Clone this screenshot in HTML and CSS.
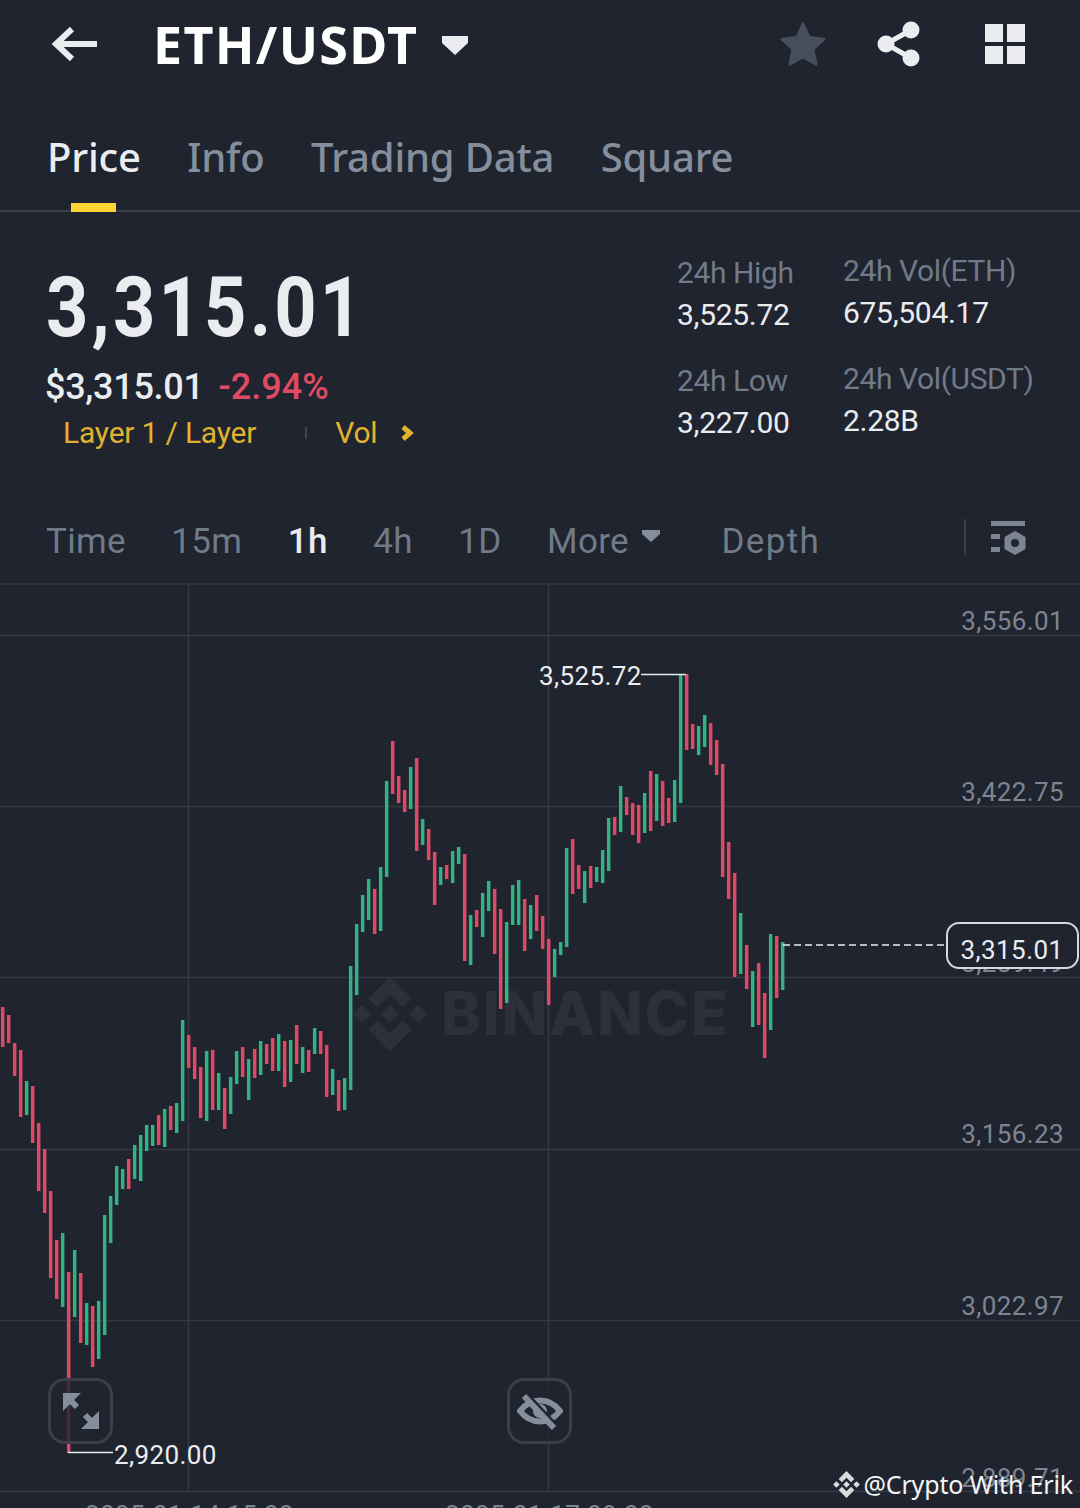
FILE: index.html
```html
<!DOCTYPE html>
<html lang="en">

  <head>
    <meta charset="UTF-8">
    <meta name="viewport" content="width=device-width, initial-scale=1.0">
    <title>ETH/USDT</title>
    <link rel="stylesheet" href="styles.css">
  </head>

  <body>
    <svg class="defs" width="0" height="0">
      <symbol id="bnb" viewBox="0 0 32 32">
        <path d="M16 3l7.6 7.6-3.2 3.2L16 9.4l-4.4 4.4-3.2-3.2zM16 29l7.6-7.6-3.2-3.2-4.4 4.4-4.4-4.4-3.2 3.2zM16 12.8l3.2 3.2-3.2 3.2-3.2-3.2zM3 16l3.2-3.2L9.4 16l-3.2 3.2zM22.600 16l3.2-3.2L29 16l-3.200 3.2z"/>
      </symbol>
    </svg>

    <header class="topbar">
      <svg class="back" width="50" height="36" viewBox="0 0 50 36">
        <path d="M47 18H6M22 3L6 18l16 15"/>
      </svg>
      <div class="pair">ETH/USDT</div>
      <svg class="caret" width="30" height="22" viewBox="0 0 30 22">
        <path d="M2 2h26v7L15 21 2 9z"/>
      </svg>
      <div class="topbar-actions">
        <svg class="star" width="48" height="48" viewBox="0 0 48 48">
          <path d="M24 4l6 13.500 15 1.700-11 10 3 15-13-7.500-13 7.500 3-15-11-10 15-1.700z"/>
        </svg>
        <svg class="share" width="46" height="46" viewBox="0 0 46 46">
          <path d="M35 9L10 23l25 14"/>
          <circle cx="35" cy="9" r="8.500"/>
          <circle cx="10" cy="23" r="8.500"/>
          <circle cx="35" cy="37" r="8.500"/>
        </svg>
        <div class="tiles">
          <span></span><span></span><span></span><span></span>
        </div>
      </div>
    </header>

    <nav class="tabs">
      <div class="tab tab-active">Price</div>
      <div class="tab">Info</div>
      <div class="tab">Trading Data</div>
      <div class="tab">Square</div>
    </nav>

    <section class="summary">
      <div class="quote">
        <div class="last-price">3,315.01</div>
        <div class="quote-line">
          <span class="fiat">$3,315.01</span>
          <span class="change">-2.94%</span>
        </div>
        <div class="tags">
          <span>Layer 1 / Layer</span>
          <i class="tag-sep"></i>
          <span>Vol</span>
          <svg class="tag-arrow" width="14" height="18" viewBox="0 0 14 18">
            <path d="M3 3l7 6-7 6"/>
          </svg>
        </div>
      </div>
      <div class="stats stats-first">
        <div class="stat-name">24h High</div>
        <div class="stat-value">3,525.72</div>
        <div class="stat-name stat-gap">24h Low</div>
        <div class="stat-value">3,227.00</div>
      </div>
      <div class="stats stats-second">
        <div class="stat-name">24h Vol(ETH)</div>
        <div class="stat-value">675,504.17</div>
        <div class="stat-name stat-gap">24h Vol(USDT)</div>
        <div class="stat-value">2.28B</div>
      </div>
    </section>

    <nav class="intervals">
      <div>Time</div>
      <div>15m</div>
      <div class="interval-active">1h</div>
      <div>4h</div>
      <div>1D</div>
      <div class="more">More
        <svg width="20" height="14" viewBox="0 0 20 14">
          <path d="M1 1h18v4l-9 8-9-8z"/>
        </svg>
      </div>
      <div class="depth">Depth</div>
      <i class="interval-sep"></i>
      <svg class="indicator" width="36" height="36" viewBox="0 0 36 36">
        <path d="M1 2h34v5H1zM1 15h9v5H1zM1 28h9v5H1z"/>
        <path fill-rule="evenodd" d="M25 12l10.500 6v12L25 36l-10.500-6V18zM25 20a4 4 0 1 0 0 8 4 4 0 0 0 0-8z"/>
      </svg>
    </nav>

    <main class="chart">
      <svg id="chart-svg" class="chart-svg" width="1080" height="923" viewBox="0 585 1080 923">
        <g class="watermark">
          <use href="#bnb" x="344" y="968" width="92" height="92"/>
          <text x="441" y="1035">BINANCE</text>
        </g>
        <path class="grid" d="M0 635.500H1080M0 806.500H1080M0 977.500H1080M0 1149.500H1080M0 1320.500H1080M0 1491.500H1080M188.500 585V1491M548.500 585V1491"/>

        <g id="candles"></g>

        <path class="marker" d="M641 674.500H686M68 1452.500H113"/>
        <text class="marker-text" x="539" y="685">3,525.72</text>
        <text class="marker-text" x="114" y="1464">2,920.00</text>

        <g class="axis">
          <text x="1064" y="630">3,556.01</text>
          <text x="1064" y="801">3,422.75</text>
          <text x="1064" y="972">3,289.49</text>
          <text x="1064" y="1143">3,156.23</text>
          <text x="1064" y="1315">3,022.97</text>
          <text x="1064" y="1487">2,889.71</text>
        </g>
        <g class="dates">
          <text x="85" y="1524">2025-01-14 15:00</text>
          <text x="445" y="1524">2025-01-17 09:00</text>
        </g>

        <path class="last-line" d="M783 945H946"/>
        <rect class="last-pill" x="947" y="923" width="131" height="45" rx="12"/>
        <text class="last-text" x="1012" y="959">3,315.01</text>
      </svg>

      <div class="chart-btn chart-btn-expand">
        <svg width="42" height="42" viewBox="0 0 42 42">
          <path d="M3 3h18L3 21zM39 39H21l18-18z"/>
          <path class="btn-stroke" d="M10 10l7 7M25 25l7 7"/>
        </svg>
      </div>
      <div class="chart-btn chart-btn-eye">
        <svg width="46" height="46" viewBox="0 0 46 46">
          <path class="btn-stroke" d="M3 23c11-14 29-14 40 0-11 14-29 14-40 0z"/>
          <circle class="btn-fill" cx="23" cy="23" r="7"/>
          <path class="btn-gap" d="M9 6l30 32"/>
          <path class="btn-stroke" d="M7 8l30 32"/>
        </svg>
      </div>

      <div class="credit">
        <svg width="33" height="33" viewBox="0 0 32 32"><use href="#bnb"/></svg>
        <span>@Crypto With Erik</span>
      </div>
    </main>

    <script src="chart.js"></script>
  </body>

</html>
```

FILE: styles.css
```css
* {
  box-sizing: border-box;
}

html,
body {
  margin: 0;
  height: 100%;
}

body {
  width: 1080px;
  height: 1508px;
  overflow: hidden;
  background-color: #1f242f;
  color: #eaecef;
  font-family: "Noto Sans", sans-serif;
}

.defs {
  position: absolute;
}

.topbar {
  display: flex;
  align-items: center;
  height: 88px;
  padding: 0 55px 0 50px;
}

.back {
  fill: none;
  stroke: #eaecef;
  stroke-width: 6;
}

.pair {
  margin: -2px 0 0 53px;
  font-family: "Noto Sans", sans-serif;
  font-size: 52px;
  font-weight: 700;
  letter-spacing: 1.300px;
  color: #fff;
}

.caret {
  margin-left: 22px;
  margin-top: 2px;
  fill: #eaecef;
}

.topbar-actions {
  display: flex;
  align-items: center;
  margin-left: auto;
}

.star {
  fill: #474e5c;
  stroke: #474e5c;
  stroke-width: 3;
  stroke-linejoin: round;
}

.share {
  margin-left: 49px;
  fill: #eaecef;
  stroke: #eaecef;
}

.share path {
  fill: none;
  stroke-width: 5;
}

.share circle {
  stroke: none;
}

.tiles {
  display: grid;
  grid-template-columns: 18px 18px;
  grid-auto-rows: 18px;
  gap: 4px;
  margin-left: 63px;
}

.tiles span {
  background-color: #eaecef;
}

.tabs {
  display: flex;
  gap: 46.500px;
  height: 124px;
  padding: 39px 0 0 47px;
  border-bottom: 2px solid #383d48;
  letter-spacing: -0.200px;
}

.tab {
  position: relative;
  height: 85px;
  font-size: 40px;
  line-height: 60px;
  font-weight: 500;
  color: #848e9c;
}

.tab-active {
  color: #eaecef;
}

.tab-active:after {
  content: "";
  position: absolute;
  left: 24px;
  bottom: 0;
  width: 45px;
  height: 9px;
  background-color: #fcd535;
}

.summary {
  position: relative;
  height: 289px;
}

.quote {
  padding: 47px 0 0 46px;
}

/* the app's numerals are narrower than Roboto, so squeeze the big one */
.last-price {
  font-family: Roboto, sans-serif;
  font-size: 84px;
  line-height: 98px;
  font-weight: 700;
  letter-spacing: 3.600px;
  transform: scaleX(0.88);
  transform-origin: left;
}

.quote-line {
  display: flex;
  gap: 15px;
  margin: 8px 0 0 -1px;
  font-family: Roboto, sans-serif;
  font-size: 36px;
  line-height: 44px;
  font-weight: 500;
}

.fiat {
  letter-spacing: -0.300px;
}

.change {
  color: #e04a62;
}

.tags {
  display: flex;
  align-items: center;
  margin: 4px 0 0 17px;
  font-family: Roboto, sans-serif;
  font-size: 30px;
  line-height: 40px;
  letter-spacing: -0.200px;
  color: #e0b22e;
}

.tag-sep {
  width: 2px;
  height: 12px;
  margin: 0 28px 0 49px;
  background-color: #3d434e;
}

.tag-arrow {
  margin-left: 23px;
  fill: none;
  stroke: #e0b22e;
  stroke-width: 5;
}

.stats {
  position: absolute;
  font-family: Roboto, sans-serif;
  font-size: 30px;
  line-height: 42px;
  letter-spacing: -0.400px;
  white-space: nowrap;
}

.stats-first {
  left: 677px;
  top: 40px;
}

.stats-second {
  left: 843px;
  top: 38px;
}

.stat-name {
  color: #707a89;
}

.stat-value {
  color: #eaecef;
  letter-spacing: -0.300px;
}

.stat-gap {
  margin-top: 24px;
}

.intervals {
  display: flex;
  align-items: center;
  gap: 45.500px;
  height: 84px;
  padding: 0 54px 2px 46px;
  border-bottom: 2px solid #2d323c;
  font-family: Roboto, sans-serif;
  font-size: 35px;
  letter-spacing: 0.300px;
  color: #707a89;
}

.interval-active {
  color: #eaecef;
  font-weight: 500;
}

.more {
  display: flex;
  align-items: center;
  gap: 12px;
}

.more svg {
  margin-top: -10px;
  fill: #848e9c;
}

.depth {
  margin-left: 15px;
  letter-spacing: 1.400px;
}

.interval-sep {
  width: 2px;
  height: 36px;
  margin-left: auto;
  margin-top: -8px;
  background-color: #383d48;
}

.indicator {
  margin-left: -21.500px;
  margin-top: -8px;
  fill: #7d8594;
}

.chart {
  position: relative;
  height: 923px;
}

.chart-svg {
  display: block;
}

.grid {
  fill: none;
  stroke: #343944;
  stroke-width: 1.500;
}

.watermark {
  fill: #2b303a;
  font-family: Inter, sans-serif;
  font-size: 60px;
  font-weight: 800;
  letter-spacing: 1.700px;
}

.candle-up {
  stroke: #35b184;
  stroke-width: 3.500;
}

.candle-down {
  stroke: #dc4a63;
  stroke-width: 3.500;
}

.marker {
  fill: none;
  stroke: #eaecef;
  stroke-width: 1.500;
}

.marker-text,
.last-text {
  fill: #eaecef;
  font-family: Roboto, sans-serif;
  font-size: 26px;
  letter-spacing: 0.400px;
}

.last-text {
  text-anchor: middle;
}

.axis text {
  fill: #7d8592;
  font-family: Roboto, sans-serif;
  font-size: 26px;
  letter-spacing: 0.400px;
  text-anchor: end;
}

.dates text {
  fill: #7d8592;
  font-family: Roboto, sans-serif;
  font-size: 26px;
  letter-spacing: 0.400px;
}

.last-line {
  fill: none;
  stroke: #eaecef;
  stroke-width: 1.500;
  stroke-dasharray: 7 4;
}

.last-pill {
  fill: #1f242f;
  stroke: #d5d8dd;
  stroke-width: 2;
}

.chart-btn {
  position: absolute;
  top: 793px;
  display: flex;
  align-items: center;
  justify-content: center;
  width: 65px;
  height: 66px;
  border: 3px solid #3a3f4a;
  border-radius: 17px;
  background-color: rgba(31, 36, 47, 0.8);
}

.chart-btn-expand {
  left: 48px;
}

.chart-btn-eye {
  left: 507px;
}

.chart-btn svg {
  fill: #848e9c;
}

.btn-stroke {
  fill: none;
  stroke: #848e9c;
  stroke-width: 6;
}

.btn-fill {
  fill: #848e9c;
}

.btn-gap {
  fill: none;
  stroke: #1f242f;
  stroke-width: 5;
}

.credit {
  position: absolute;
  right: 7px;
  top: 881px;
  display: flex;
  align-items: center;
  font-size: 25px;
  line-height: 36px;
  letter-spacing: -0.150px;
  color: #f4f5f6;
}

.credit svg {
  fill: #d8dadc;
}
```

FILE: chart.js
```js
// one candle per entry: direction, top y, bottom y (page pixels)
const candles = [
  'd1007,1047', 'd1015,1043', 'd1043,1076', 'd1050,1117', 'u1081,1115', 'd1086,1143', 'd1123,1191', 'd1149,1213',
  'd1191,1278', 'd1240,1299', 'u1233,1307', 'd1272,1453', 'u1250,1317', 'd1273,1343', 'u1303,1345', 'd1306,1367',
  'u1301,1359', 'u1215,1335', 'u1196,1243', 'u1166,1205', 'u1169,1189', 'd1159,1189', 'u1145,1179', 'u1135,1181',
  'u1125,1151', 'u1125,1146', 'd1115,1145', 'u1109,1147', 'd1106,1130', 'u1103,1133', 'u1020,1121', 'd1035,1068',
  'd1047,1079', 'd1067,1118', 'u1051,1121', 'd1050,1110', 'u1073,1110', 'd1088,1129', 'u1077,1114', 'u1051,1084',
  'd1047,1077', 'u1059,1100', 'd1049,1078', 'u1041,1075', 'd1044,1064', 'd1038,1071', 'u1034,1071', 'd1041,1087',
  'u1040,1082', 'd1025,1064', 'u1047,1073', 'd1050,1072', 'u1028,1054', 'd1031,1054', 'd1045,1097', 'u1069,1095',
  'd1080,1111', 'u1078,1110', 'u966,1090', 'u924,995', 'u895,932', 'u879,920', 'd889,934', 'u867,931',
  'u781,877', 'd741,794', 'd776,803', 'd790,812', 'u767,809', 'd758,851', 'u819,845', 'd829,860',
  'd852,905', 'u867,885', 'd865,879', 'u851,883', 'u847,864', 'd854,961', 'u915,965', 'd910,927',
  'u893,937', 'u881,911', 'd889,954', 'd909,1009', 'u922,1003', 'u885,925', 'u880,925', 'd899,951',
  'u905,939', 'd895,931', 'd916,949', 'd939,1005', 'u949,977', 'u942,955', 'u848,947', 'd839,894',
  'd865,889', 'u871,903', 'd866,888', 'u867,882', 'u850,883', 'u818,871', 'd817,835', 'u786,832',
  'd797,815', 'd803,835', 'd805,843', 'u793,833', 'd771,831', 'u774,821', 'd781,826', 'd798,823',
  'u780,822', 'u675,803', 'd674,750', 'd724,749', 'u726,755', 'u715,747', 'd723,765', 'd740,775',
  'd764,877', 'd842,899', 'd873,977', 'u913,974', 'd945,989', 'u971,1027', 'd963,1025', 'd993,1058',
  'u934,1030', 'd936,998', 'u942,990'
];

const group = document.getElementById('candles');

candles.forEach(function (candle, i) {
  const ys = candle.slice(1).split(',');
  const x = 2.67 + i * 6;
  const line = document.createElementNS('http://www.w3.org/2000/svg', 'line');
  line.setAttribute('x1', x);
  line.setAttribute('x2', x);
  line.setAttribute('y1', ys[0]);
  line.setAttribute('y2', ys[1]);
  line.setAttribute('class', candle[0] === 'u' ? 'candle-up' : 'candle-down');
  group.appendChild(line);
});
```
